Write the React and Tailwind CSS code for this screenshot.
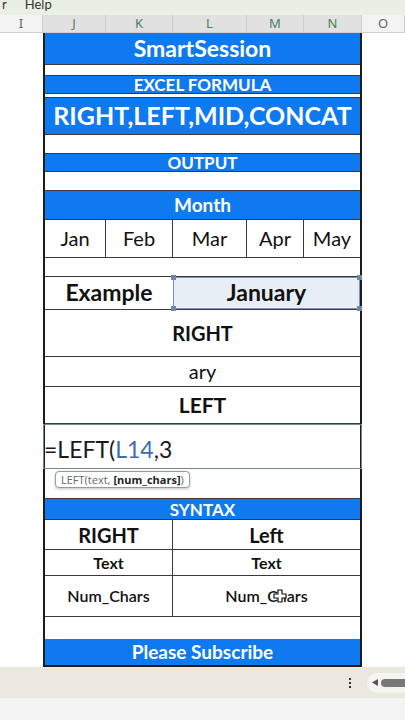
import React from 'react';

const BLUE = 'bg-[#0f7aef]';

function Row({ h, className = '', children }) {
  return (
    <div className={`flex items-center justify-center border-b border-[#3a3a3a] ${className}`} style={{ height: h }}>
      {children}
    </div>
  );
}

function Handle({ className }) {
  return <span className={`absolute w-[5px] h-[5px] bg-[#6f86a8] ${className}`} />;
}

function CrossCursor() {
  return (
    <svg width="14" height="14" viewBox="0 0 14 14" className="absolute left-[100px] top-[13px]">
      <path d="M5 1h4v4h4v4h-4v4h-4v-4h-4v-4h4z" fill="#fff" stroke="#111" strokeWidth="1.2" />
    </svg>
  );
}

export default function App() {
  const cols = [
    { l: 'I', w: 43, sel: false },
    { l: 'J', w: 63, sel: true },
    { l: 'K', w: 67, sel: true },
    { l: 'L', w: 74, sel: true },
    { l: 'M', w: 57, sel: true },
    { l: 'N', w: 58, sel: true },
    { l: 'O', w: 43, sel: false },
  ];
  const months = [
    { m: 'Jan', w: 'w-[61px]' },
    { m: 'Feb', w: 'w-[67px]' },
    { m: 'Mar', w: 'w-[74px]' },
    { m: 'Apr', w: 'w-[57px]' },
  ];

  return (
    <div className="w-[405px] h-[720px] overflow-hidden bg-white flex flex-col" style={{ fontFamily: 'Lato, "Open Sans", sans-serif' }}>
      {/* ribbon tail */}
      <div className="h-[15px] bg-[#e9efe2] flex items-end gap-[18px] px-[2px] text-[13px] leading-none text-[#333] overflow-hidden">
        <span className="mb-[4px]">r</span>
        <span className="mb-[4px]">Help</span>
      </div>

      {/* column headers */}
      <div className="h-[18px] flex bg-[#f3f3f3] border-b border-[#d0d0d0] text-[13px]" style={{ fontFamily: '"Noto Sans", sans-serif' }}>
        {cols.map((c) => (
          <div
            key={c.l}
            className={`flex items-center justify-center border-r border-[#cfcfcf] ${c.sel ? 'bg-[#e1e1e1] text-[#4f7d60]' : 'text-[#666]'}`}
            style={{ width: c.w }}
          >
            {c.l}
          </div>
        ))}
        <div className="flex-1" />
      </div>

      {/* sheet */}
      <div className="flex h-[634px]">
        <div className="w-[43px]" />
        <div className="w-[319px] border-x-2 border-[#1c1c1c] flex flex-col text-[#111]">
          <Row h={32} className={`${BLUE} text-white text-[23px] font-bold`}>SmartSession</Row>
          <Row h={11} />
          <Row h={18} className={`${BLUE} text-white text-[17px] font-bold`}>EXCEL FORMULA</Row>
          <Row h={4} />
          <Row h={37} className={`${BLUE} text-white text-[25px] font-bold`}>RIGHT,LEFT,MID,CONCAT</Row>
          <Row h={19} />
          <Row h={18} className={`${BLUE} text-white text-[17px] font-bold`}>OUTPUT</Row>
          <Row h={19} />
          <Row h={29} className={`${BLUE} text-white text-[19px] font-bold`}>Month</Row>
          <div className="flex h-[38px] border-b border-[#3a3a3a] text-[20px]">
            {months.map((x) => (
              <div key={x.m} className={`${x.w} flex items-center justify-center border-r border-[#3a3a3a]`}>{x.m}</div>
            ))}
            <div className="flex-1 flex items-center justify-center">May</div>
          </div>
          <Row h={19} />
          <div className="flex h-[33px] border-b border-[#3a3a3a] text-[23px] font-bold">
            <div className="w-[128px] flex items-center justify-center">Example</div>
            <div className="relative flex-1 flex items-center justify-center bg-[#e8eef6] border border-[#7a93b8]">
              January
              <Handle className="-left-[3px] -top-[3px]" />
              <Handle className="-right-[3px] -top-[3px]" />
              <Handle className="-left-[3px] -bottom-[3px]" />
              <Handle className="-right-[3px] -bottom-[3px]" />
            </div>
          </div>
          <Row h={47} className="text-[20px] font-bold">RIGHT</Row>
          <Row h={30} className="text-[20px]">ary</Row>
          <Row h={38} className="text-[21px] font-bold">LEFT</Row>
          <div className="h-[45px] flex items-center pt-[4px] border border-[#6f8f7c] -mx-[2px] text-[23px] text-[#1a1a1a]">
            <span>=LEFT(<span className="text-[#3f6cae]">L14</span>,3</span>
          </div>
          <div className="relative h-[30px] border-b border-[#3a3a3a]">
            <div
              className="absolute left-[10px] top-[2px] h-[17px] px-[5px] flex items-center rounded-[4px] border border-[#9a9a9a] bg-white shadow-[0_1px_3px_rgba(0,0,0,0.25)] text-[11px] text-[#666] whitespace-nowrap"
              style={{ fontFamily: '"Open Sans", sans-serif' }}
            >
              LEFT(text,<span className="ml-[3px] font-bold text-[#222]">[num_chars]</span>)
            </div>
          </div>
          <Row h={21} className={`${BLUE} text-white text-[17px] font-bold`}>SYNTAX</Row>
          <div className="flex h-[30px] border-b border-[#3a3a3a] text-[20px] font-bold">
            <div className="w-[128px] flex items-center justify-center border-r border-[#3a3a3a]">RIGHT</div>
            <div className="flex-1 flex items-center justify-center">Left</div>
          </div>
          <div className="flex h-[26px] border-b border-[#3a3a3a] text-[16px] font-bold">
            <div className="w-[128px] flex items-center justify-center border-r border-[#3a3a3a]">Text</div>
            <div className="flex-1 flex items-center justify-center">Text</div>
          </div>
          <div className="flex h-[41px] border-b border-[#3a3a3a] text-[16px] font-semibold">
            <div className="w-[128px] flex items-center justify-center border-r border-[#3a3a3a]">Num_Chars</div>
            <div className="relative flex-1 flex items-center justify-center">
              Num_Chars
              <CrossCursor />
            </div>
          </div>
          <Row h={22} className="border-b-0" />
          <div className={`${BLUE} h-[28px] flex items-center justify-center text-white text-[19px] font-bold border-b-2 border-[#1c1c1c]`}>
            Please Subscribe
          </div>
        </div>
        <div className="flex-1" />
      </div>

      {/* status bar */}
      <div className="h-[31px] bg-[#ebe8df] flex items-center justify-end">
        <div className="flex flex-col gap-[2px] mr-[16px]">
          <span className="w-[2px] h-[2px] bg-[#333]" />
          <span className="w-[2px] h-[2px] bg-[#333]" />
          <span className="w-[2px] h-[2px] bg-[#333]" />
        </div>
        <div className="w-[38px] h-[20px] bg-[#f5f4f0] rounded-l-[10px] flex items-center pl-[5px] gap-[3px]">
          <svg width="6" height="7" viewBox="0 0 6 7"><path d="M6 0v7L0 3.5z" fill="#555" /></svg>
          <div className="flex-1 h-[8px] bg-[#777] rounded-l-[4px]" />
        </div>
      </div>
      <div className="flex-1 bg-[#f3f3f3]" />
    </div>
  );
}
